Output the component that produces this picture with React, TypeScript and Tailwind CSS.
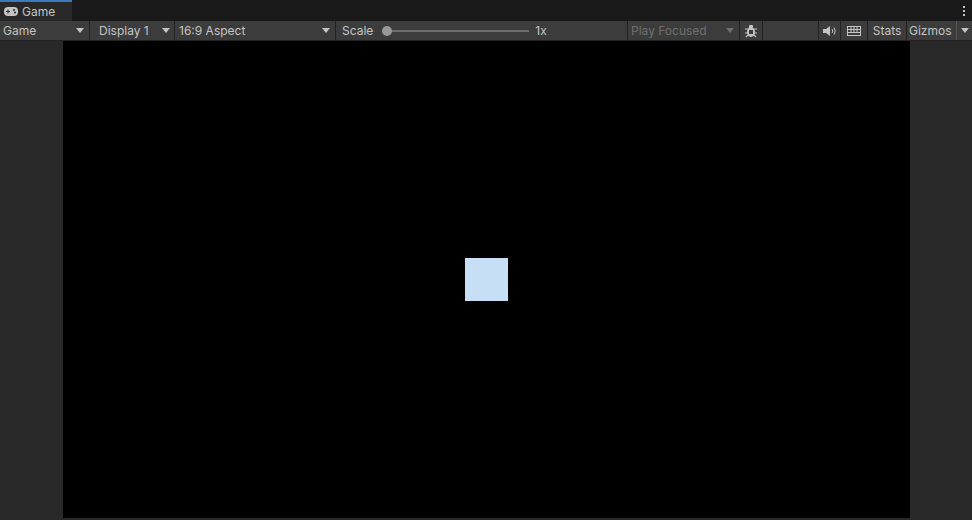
function Caret() {
  return <span className="ml-auto w-0 h-0 border-l-[4px] border-r-[4px] border-t-[5px] border-l-transparent border-r-transparent border-t-[#c4c4c4]" />
}

export default function App() {
  return (
    <div className="w-[972px] h-[520px] bg-[#282828] flex flex-col overflow-hidden text-[12px] text-[#c4c4c4]" style={{ fontFamily: 'Inter, "Noto Sans", sans-serif' }}>
      <div className="h-[21px] bg-[#191919] flex items-end">
        <div className="h-[21px] w-[72px] bg-[#282828] border-t-2 border-[#3a79bb] flex items-center gap-1 px-1">
          <svg width="14" height="9" viewBox="0 0 14 9"><rect x="0" y="0" width="14" height="9" rx="4" fill="#c4c4c4" /><rect x="2" y="4" width="4" height="1" fill="#282828" /><rect x="3.5" y="2.5" width="1" height="4" fill="#282828" /><circle cx="10" cy="3" r="1" fill="#282828" /><circle cx="11" cy="5.5" r="1" fill="#282828" /></svg>
          <span>Game</span>
        </div>
        <div className="ml-auto h-[21px] flex flex-col justify-center gap-[2px] pr-[7px]">
          <span className="w-[2px] h-[2px] bg-[#c4c4c4]" /><span className="w-[2px] h-[2px] bg-[#c4c4c4]" /><span className="w-[2px] h-[2px] bg-[#c4c4c4]" />
        </div>
      </div>
      <div className="h-[20px] bg-[#3c3c3c] flex items-center border-b border-[#232323]">
        <div className="w-[90px] h-full flex items-center pl-[3px] pr-[5px] border-r border-[#232323]">Game<Caret /></div>
        <div className="w-[85px] h-full flex items-center pl-[9px] pr-[4px] border-r border-[#232323]">Display 1<Caret /></div>
        <div className="w-[161px] h-full flex items-center pl-[4px] pr-[5px] border-r border-[#232323]">16:9 Aspect<Caret /></div>
        <div className="w-[292px] h-full flex items-center pl-[6px] border-r border-[#232323]">
          <span>Scale</span>
          <div className="relative ml-[10px] w-[146px] h-[2px] bg-[#6e6e6e]">
            <span className="absolute -left-[1px] -top-[4px] w-[10px] h-[10px] rounded-full bg-[#999999]" />
          </div>
          <span className="ml-[6px]">1x</span>
        </div>
        <div className="w-[112px] h-full flex items-center pl-[3px] pr-[5px] text-[#6f6f6f] border-r border-[#232323]">Play Focused<span className="ml-auto w-0 h-0 border-l-[4px] border-r-[4px] border-t-[5px] border-l-transparent border-r-transparent border-t-[#6f6f6f]" /></div>
        <div className="w-[23px] h-full flex items-center justify-center border-r border-[#232323]">
          <svg width="14" height="14" viewBox="0 0 14 14" fill="#c4c4c4"><ellipse cx="7" cy="8" rx="4" ry="5" /><rect x="5" y="1" width="4" height="3" rx="1" /><path d="M1 5h3M10 5h3M1 9h3M10 9h3M2 13l2-2M12 13l-2-2" stroke="#c4c4c4" strokeWidth="1.2" /><rect x="5" y="6" width="4" height="4" fill="#3c3c3c" /></svg>
        </div>
        <div className="w-[56px] h-full border-r border-[#232323]" />
        <div className="w-[22px] h-full flex items-center justify-center border-r border-[#232323]">
          <svg width="13" height="10" viewBox="0 0 13 10" fill="#c4c4c4"><rect x="0" y="3" width="3" height="4" /><path d="M3 3l4-3v10l-4-3z" /><path d="M9 3q1.5 2 0 4M11 1.5q2.5 3.5 0 7" stroke="#c4c4c4" fill="none" /></svg>
        </div>
        <div className="w-[27px] h-full flex items-center justify-center border-r border-[#232323]">
          <svg width="14" height="10" viewBox="0 0 14 10" fill="none" stroke="#c4c4c4"><rect x="0.5" y="0.5" width="13" height="9" /><path d="M0.5 3.5h13M0.5 6.5h13M4 0.5v6M7 0.5v6M10 0.5v6" /></svg>
        </div>
        <div className="w-[39px] h-full flex items-center justify-center border-r border-[#232323]">Stats</div>
        <div className="w-[50px] h-full flex items-center pl-[2px] border-r border-[#555]">Gizmos</div>
        <div className="flex-1 h-full flex items-center justify-center"><span className="w-0 h-0 border-l-[4px] border-r-[4px] border-t-[5px] border-l-transparent border-r-transparent border-t-[#c4c4c4]" /></div>
      </div>
      <div className="flex-1 flex justify-center pb-[2px]">
        <div className="w-[847px] ml-[1px] bg-black flex items-center justify-center">
          <div className="w-[43px] h-[43px] bg-[#c6dff5]" />
        </div>
      </div>
    </div>
  )
}
